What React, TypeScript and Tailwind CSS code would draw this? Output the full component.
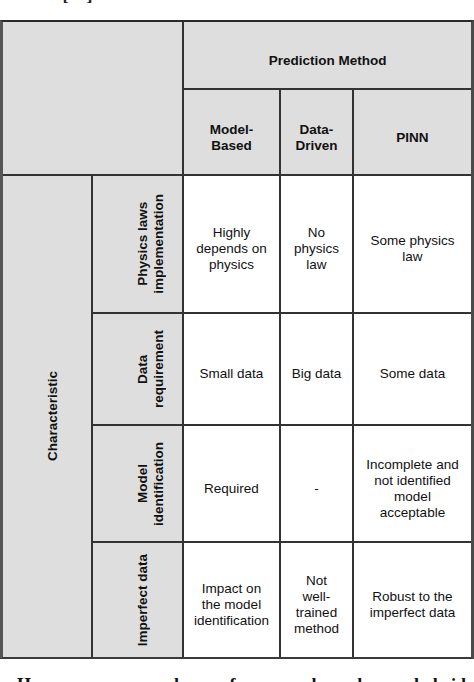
import React from "react";

const sans = "font-['Liberation_Sans',Arial,sans-serif]";

function Cell({
  children,
  className = "",
  grey = false,
}: {
  children?: React.ReactNode;
  className?: string;
  grey?: boolean;
}) {
  return (
    <div
      className={`${grey ? "bg-[#dedede]" : "bg-white"} flex items-center justify-center text-center text-[13.5px] leading-[16px] text-[#111] ${className}`}
    >
      {children}
    </div>
  );
}

function VCell({ children, className = "" }: { children: React.ReactNode; className?: string }) {
  return (
    <div className={`bg-[#dedede] flex items-center justify-start pl-[42px] text-[13.5px] leading-[16px] text-[#111] font-bold ${className}`}>
      <div className="[writing-mode:vertical-rl] rotate-180 text-center">{children}</div>
    </div>
  );
}

export default function App() {
  return (
    <div className={`w-[474px] h-[682px] overflow-hidden bg-white flex flex-col ${sans}`}>
      <div className="h-[20px] shrink-0 overflow-hidden">
        <div className="font-['Liberation_Serif','Times_New_Roman',serif] font-bold text-[18px] leading-[18px] mt-[-15px] text-[#222] whitespace-nowrap">
          method [35].
        </div>
      </div>
      <div className="shrink-0 grid grid-cols-[88px_89px_95px_71px_117px] grid-rows-[66px_84px_136px_110px_115px_114px] gap-[2px] bg-[#333] border-t-[2px] border-t-[#2a2a2a] border-b-[2px] border-b-[#3a3a3a] border-l-[3px] border-l-[#555] border-r-[3px] border-r-[#4a4a4a]">
        <Cell grey className="col-span-2 row-span-2" />
        <Cell grey className="col-span-3 font-bold pt-[11px]">Prediction Method</Cell>
        <Cell grey className="font-bold pt-[11px]">
          Model-
          <br />
          Based
        </Cell>
        <Cell grey className="font-bold pt-[11px]">
          Data-
          <br />
          Driven
        </Cell>
        <Cell grey className="font-bold pt-[11px]">PINN</Cell>

        <VCell className="row-span-4">Characteristic</VCell>

        <VCell>
          Physics laws
          <br />
          implementation
        </VCell>
        <Cell className="pt-[10px]">
          Highly
          <br />
          depends on
          <br />
          physics
        </Cell>
        <Cell className="pt-[10px]">
          No
          <br />
          physics
          <br />
          law
        </Cell>
        <Cell className="pt-[10px]">
          Some physics
          <br />
          law
        </Cell>

        <VCell>
          Data
          <br />
          requirement
        </VCell>
        <Cell className="pt-[10px]">Small data</Cell>
        <Cell className="pt-[10px]">Big data</Cell>
        <Cell className="pt-[10px]">Some data</Cell>

        <VCell>
          Model
          <br />
          identification
        </VCell>
        <Cell className="pt-[10px]">Required</Cell>
        <Cell className="pt-[10px]">-</Cell>
        <Cell className="pt-[10px]">
          Incomplete and
          <br />
          not identified
          <br />
          model
          <br />
          acceptable
        </Cell>

        <VCell>Imperfect data</VCell>
        <Cell className="pt-[10px]">
          Impact on
          <br />
          the model
          <br />
          identification
        </Cell>
        <Cell className="pt-[10px]">
          Not
          <br />
          well-
          <br />
          trained
          <br />
          method
        </Cell>
        <Cell className="pt-[10px]">
          Robust to the
          <br />
          imperfect data
        </Cell>
      </div>
      <div className="shrink-0 pt-[17px] pl-[17px] w-[466px] font-['Liberation_Serif','Times_New_Roman',serif] font-bold text-[18px] leading-[18px] text-[#111] text-justify [text-align-last:justify]">
        However, a number of researches have hybrid
      </div>
    </div>
  );
}
